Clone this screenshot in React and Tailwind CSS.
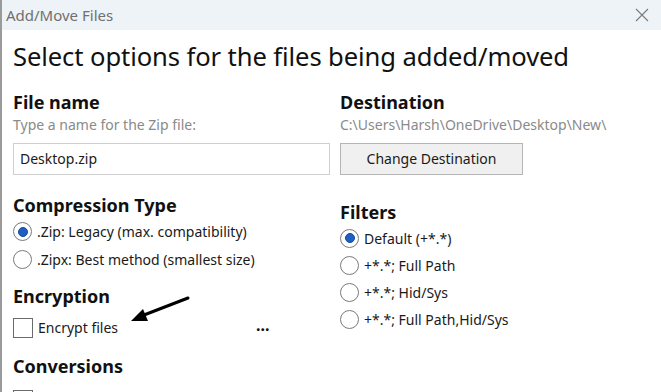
import React from 'react';

const font = { fontFamily: '"Noto Sans", "Open Sans", sans-serif' };

function Radio({ checked, label }) {
  return (
    <div className="flex items-center h-[28px]">
      <span className="w-[19px] h-[19px] rounded-full border-[1.5px] border-[#7a7a7a] flex items-center justify-center shrink-0">
        {checked && <span className="w-[10px] h-[10px] rounded-full bg-[#1f5fc4] border border-[#164a9c]" />}
      </span>
      <span className="ml-[5px] text-[14px] text-[#1a1a1a]">{label}</span>
    </div>
  );
}

function Checkbox({ label }) {
  return (
    <div className="flex items-center h-[28px]">
      <span className="w-[20px] h-[20px] border-[1.5px] border-[#6b6b6b] shrink-0" />
      {label && <span className="ml-[5px] text-[14px] text-[#1a1a1a]">{label}</span>}
    </div>
  );
}

export default function App() {
  return (
    <div className="w-[661px] h-[392px] overflow-hidden bg-white relative border-l-2 border-[#9a9a9a]" style={font}>
      {/* Title bar */}
      <div className="h-[30px] bg-[#eef3f7] flex items-center justify-between pl-[4px] pr-[12px]">
        <span className="text-[15px] text-[#707070]">Add/Move Files</span>
        <svg width="14" height="14" viewBox="0 0 14 14" className="text-[#7a7a7a]">
          <path d="M1 1 L13 13 M13 1 L1 13" stroke="currentColor" strokeWidth="1.1" fill="none" />
        </svg>
      </div>

      <div className="pl-[11px]">
        <h1 className="text-[25.6px] text-[#111] leading-none mt-[14px] tracking-[-0.1px]">Select options for the files being added/moved</h1>

        <div className="flex mt-[20px]">
          {/* Left column */}
          <div className="w-[327px] flex flex-col">
            <div className="text-[18px] font-bold text-[#111] leading-[24px]">File name</div>
            <div className="text-[14px] text-[#8a8a8a] leading-[18px] mt-[2px]">Type a name for the Zip file:</div>
            <div className="mt-[9px] w-[317px] h-[32px] border border-[#cfcfcf] flex items-center pl-[6px] text-[14px] text-[#1a1a1a]">
              Desktop.zip
            </div>
            <div className="text-[18px] font-bold text-[#111] leading-[24px] mt-[18px]">Compression Type</div>
            <div className="mt-[1px]">
              <Radio checked label=".Zip: Legacy (max. compatibility)" />
              <Radio label=".Zipx: Best method (smallest size)" />
            </div>
            <div className="text-[18px] font-bold text-[#111] leading-[24px] mt-[10px]">Encryption</div>
            <div className="flex items-center mt-[6px]">
              <Checkbox label="Encrypt files" />
              <span className="ml-[138px] text-[16px] text-[#111] font-bold leading-none -mt-[6px]">...</span>
            </div>
            <div className="text-[18px] font-bold text-[#111] leading-[24px] mt-[12px]">Conversions</div>
            <div className="mt-[8px]">
              <Checkbox />
            </div>
          </div>

          {/* Right column */}
          <div className="flex flex-col">
            <div className="text-[18px] font-bold text-[#111] leading-[24px]">Destination</div>
            <div className="text-[14px] text-[#8a8a8a] leading-[18px] mt-[2px]">C:\Users\Harsh\OneDrive\Desktop\New\</div>
            <button className="mt-[9px] w-[183px] h-[32px] bg-[#f0f0f0] border border-[#b5b5b5] text-[14px] text-[#1a1a1a]">
              Change Destination
            </button>
            <div className="text-[18px] font-bold text-[#111] leading-[24px] mt-[25px]">Filters</div>
            <div className="flex flex-col mt-[1px]">
              <div className="h-[27px] flex items-center"><Radio checked label="Default (+*.*)" /></div>
              <div className="h-[28px] flex items-center"><Radio label="+*.*; Full Path" /></div>
              <div className="h-[26px] flex items-center"><Radio label="+*.*; Hid/Sys" /></div>
              <div className="h-[28px] flex items-center"><Radio label="+*.*; Full Path,Hid/Sys" /></div>
            </div>
          </div>
        </div>
      </div>

      {/* Annotation arrow */}
      <svg className="absolute left-0 top-0 pointer-events-none" width="661" height="392">
        <line x1="186" y1="298" x2="142" y2="315" stroke="#000" strokeWidth="3" strokeLinecap="round" />
        <polygon points="129,321 141,309 146,321" fill="#000" />
      </svg>
    </div>
  );
}
